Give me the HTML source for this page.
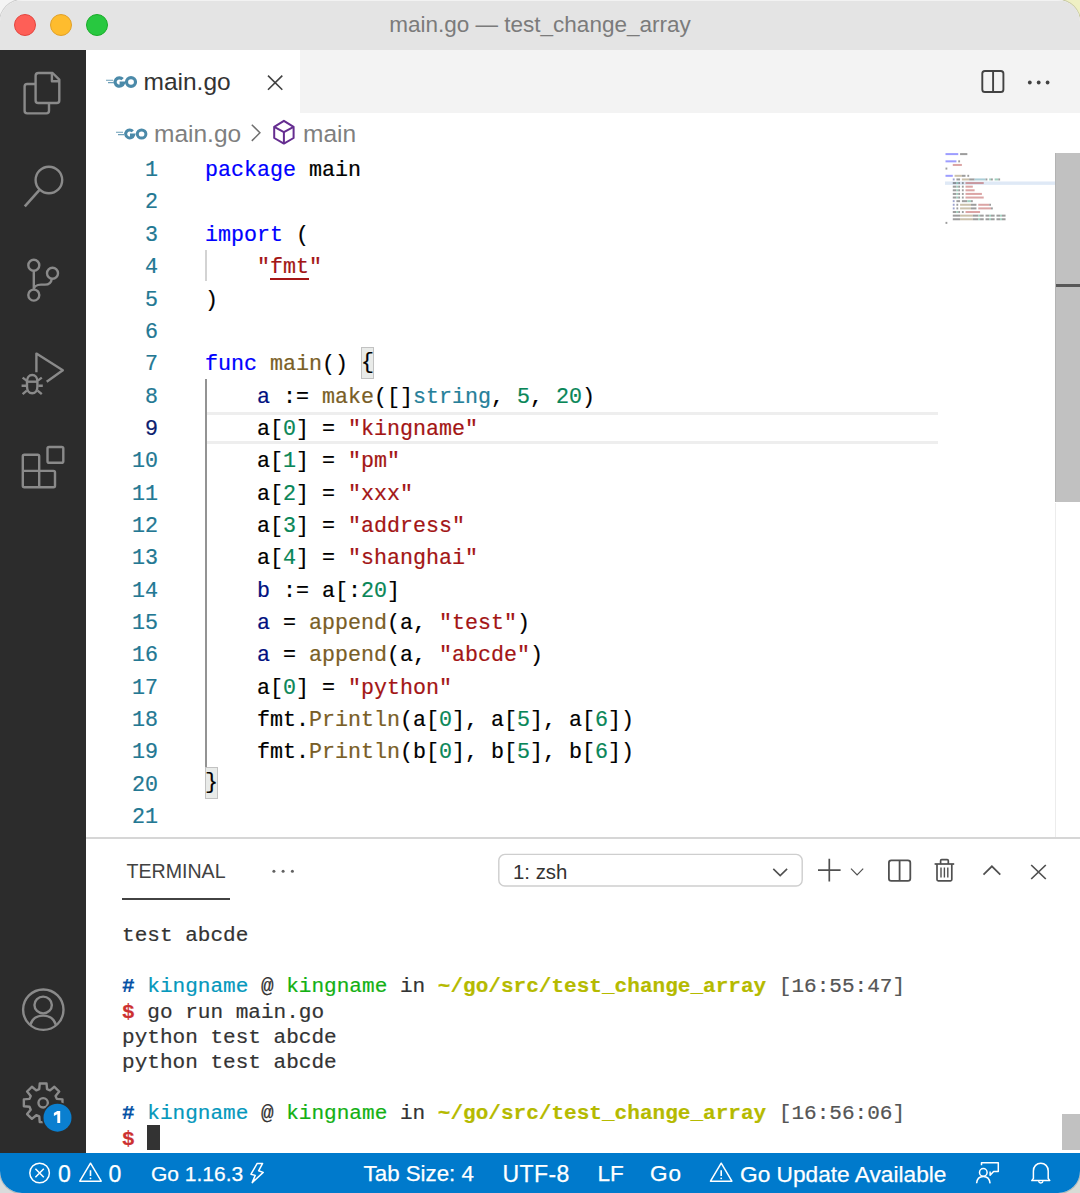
<!DOCTYPE html>
<html><head><meta charset="utf-8">
<style>
*{margin:0;padding:0;box-sizing:border-box}
html,body{width:1080px;height:1193px;overflow:hidden;background:linear-gradient(#f4f4f4,#e8e8e8 50%,#d6d8d8)}
body{position:relative;font-family:"Liberation Sans",sans-serif}
.abs{position:absolute}
#win{position:absolute;left:0;top:0;width:1080px;height:1193px;border-radius:22px;overflow:hidden;background:#fff;box-shadow:0 0 0 1px rgba(0,0,0,0.16)}
#title{left:0;top:0;width:1080px;height:50px;background:#e4e4e4;border-top:1px solid #f2f2f2}
#title .t{left:0;width:1080px;top:10px;text-align:center;font-size:22.5px;color:#7b7b7b;line-height:28px}
.tl{width:22px;height:22px;border-radius:50%;top:13.2px}
#act{left:0;top:50px;width:86px;height:1103px;background:#2c2c2c}
#tabs{left:86px;top:50px;width:994px;height:62.8px;background:#f3f3f3}
#tab1{left:86px;top:50px;width:214px;height:62.8px;background:#fff}
.mono{font-family:"Liberation Mono",monospace;-webkit-text-stroke:0.2px currentColor}
#code{left:86px;top:152.85px;width:994px}
.cl span.brm{display:inline-block;height:31.8px;line-height:32.35px;background:#e9ebe9;outline:1.5px solid #c2c2c2;outline-offset:-1.5px;vertical-align:top;margin-top:-2.3px}
.ln{position:absolute;left:0;width:72px;padding-top:2.3px;text-align:right;color:#237893;font-size:21.67px;line-height:32.35px;height:32.35px}
.cl{position:absolute;left:119px;padding-top:2.3px;white-space:pre;color:#000;font-size:21.67px;line-height:32.35px;height:32.35px}
.k{color:#0000ff}.f{color:#795e26}.s{color:#a31515}.n{color:#098658}.ty{color:#267f99}.v{color:#001080}
.st{top:1159.5px;line-height:28px;color:#fff;font-size:21px;white-space:nowrap;-webkit-text-stroke:0.25px #fff}
#status{left:0;top:1153.4px;width:1080px;height:40px;background:#007acc;color:#fff;font-size:20px}
#term .tline{position:absolute;left:122px;white-space:pre;font-size:21.06px;line-height:25.4px;height:25.4px;color:#333}
</style></head><body>
<div class="abs" style="left:0;top:0;width:40px;height:40px;background:#f4f4f4"></div>
<div class="abs" style="left:1040px;top:0;width:40px;height:40px;background:#eff0c4"></div>
<div class="abs" style="left:0;top:1153px;width:40px;height:40px;background:#d9dbdb"></div>
<div class="abs" style="left:1040px;top:1153px;width:40px;height:40px;background:#d8dcd6"></div>
<div id="win">
  <div id="title" class="abs">
    <div class="abs tl" style="left:14px;background:#fe5f57;border:1px solid #e2463f"></div>
    <div class="abs tl" style="left:50px;background:#febc2e;border:1px solid #e0a028"></div>
    <div class="abs tl" style="left:86px;background:#28c840;border:1px solid #1aab29"></div>
    <div class="abs t">main.go — test_change_array</div>
  </div>
  <div id="act" class="abs"></div>
  <svg class="abs" style="left:0;top:0" width="86" height="1193" viewBox="0 0 86 1193" fill="none" stroke="#8a8a8a" stroke-width="2.4" stroke-linejoin="round" stroke-linecap="butt">
    <!-- files -->
    <path d="M35.6 84 H27.2 Q24.6 84 24.6 86.6 V110.8 Q24.6 113.4 27.2 113.4 H46.4 Q49 113.4 49 110.8 V103"/>
    <path d="M38.4 73 H52.6 L59.3 79.7 V100.4 Q59.3 103 56.7 103 H38.2 Q35.6 103 35.6 100.4 V75.8 Q35.6 73 38.4 73 Z"/>
    <path d="M51.9 73 V81.2 H59.3" />
    <!-- search -->
    <circle cx="48.9" cy="180" r="13.3"/>
    <path d="M39.3 190.2 L24.8 206.3" stroke-width="2.6"/>
    <!-- scm -->
    <circle cx="33.8" cy="265.3" r="5.5"/>
    <circle cx="52.5" cy="273.3" r="5.5"/>
    <circle cx="33.8" cy="295.1" r="5.5"/>
    <path d="M33.8 270.8 V289.6"/>
    <path d="M51.8 278.8 C51.2 283 48.5 284.6 45 284.6 H41 C36.5 284.6 33.8 286.8 33.8 290"/>
    <!-- debug -->
    <path d="M36.4 372.2 V353.6 L62.8 370.3 L46.7 381.7"/>
    <path d="M27 381.5 C27 377.6 29.2 375 32.2 375 C35.2 375 37.4 377.6 37.4 381.5 V386.5 C37.4 390.6 35.2 393.2 32.2 393.2 C29.2 393.2 27 390.6 27 386.5 Z"/>
    <path d="M27 381.7 H37.4"/>
    <path d="M22.6 377.6 L26.6 380.6 M21.6 385.8 H26 M22.6 394.2 L26.8 390.6 M41.8 377.6 L37.8 380.6 M42.8 385.8 H38.4 M41.8 394.2 L37.6 390.6"/>
    <!-- extensions -->
    <path d="M22.8 456.3 Q22.8 454.8 24.3 454.8 H37.7 Q39.2 454.8 39.2 456.3 V470.9 H53.5 Q55 470.9 55 472.4 V485.8 Q55 487.3 53.5 487.3 H24.3 Q22.8 487.3 22.8 485.8 Z"/>
    <path d="M22.8 470.9 H39.2 V487.3"/>
    <rect x="47.5" y="447" width="15.8" height="15.8" rx="1.6"/>
    <!-- account -->
    <circle cx="43.3" cy="1009.7" r="20.2"/>
    <ellipse cx="43.15" cy="1005" rx="8.7" ry="8.4"/>
    <path d="M30.3 1024.8 C32.3 1018.6 37.3 1015.6 43.1 1015.6 C48.9 1015.6 53.9 1018.6 55.9 1024.8"/>
    <!-- gear -->
    <path d="M39.24 1089.15 L39.75 1083.50 L46.55 1083.50 L47.06 1089.15 L50.03 1090.38 L54.39 1086.74 L59.21 1091.56 L55.57 1095.92 L56.80 1098.89 L62.45 1099.40 L62.45 1106.20 L56.80 1106.71 L55.57 1109.68 L59.21 1114.04 L54.39 1118.86 L50.03 1115.22 L47.06 1116.45 L46.55 1122.10 L39.75 1122.10 L39.24 1116.45 L36.27 1115.22 L31.91 1118.86 L27.09 1114.04 L30.73 1109.68 L29.50 1106.71 L23.85 1106.20 L23.85 1099.40 L29.50 1098.89 L30.73 1095.92 L27.09 1091.56 L31.91 1086.74 L36.27 1090.38 Z"/>
    <circle cx="43.15" cy="1102.8" r="4.7"/>
    <circle cx="57.5" cy="1117.7" r="15.6" fill="#2c2c2c" stroke="none"/>
    <circle cx="57.5" cy="1117.7" r="14" fill="#0a7fd0" stroke="none"/>
    <path d="M57.3 1110.9 H60.2 V1122.9 H57.3 V1114.3 L53.9 1115.9 V1113.1 Z" fill="#fff" stroke="none"/>
  </svg>
  <div id="tabs" class="abs"></div>
  <div id="tab1" class="abs"></div>
  <svg class="abs" style="left:0;top:0" width="1080" height="160" viewBox="0 0 1080 160" fill="none">
    <!-- go icon tab -->
    <g stroke="#4b8aa9" stroke-width="3.2" stroke-linecap="butt">
      <path d="M122.6 79.2 A4.3 4.2 0 1 0 123.5 83.2 H119.6"/>
      <ellipse cx="131" cy="82" rx="4.5" ry="4.3"/>
    </g>
    <path d="M106 80.2 H113 M108 82.6 H114" stroke="#6c9fb8" stroke-width="1.1"/>
    <!-- tab close -->
    <path d="M268 75.6 L282.3 89.8 M282.3 75.6 L268 89.8" stroke="#424242" stroke-width="1.6"/>
    <!-- split editor -->
    <rect x="982.3" y="71" width="21.1" height="21" rx="2.6" stroke="#424242" stroke-width="1.9"/>
    <path d="M993.1 71 V92" stroke="#424242" stroke-width="1.9"/>
    <circle cx="1029.8" cy="82.5" r="1.9" fill="#424242"/>
    <circle cx="1038.7" cy="82.5" r="1.9" fill="#424242"/>
    <circle cx="1047.6" cy="82.5" r="1.9" fill="#424242"/>
    <!-- breadcrumb go icon -->
    <g stroke="#4b8aa9" stroke-width="3" stroke-linecap="butt">
      <path d="M132.8 131.2 A4.1 4.0 0 1 0 133.7 135.1 H130"/>
      <ellipse cx="141.6" cy="134" rx="4.3" ry="4.1"/>
    </g>
    <path d="M116 132.2 H123 M118 134.6 H124" stroke="#6c9fb8" stroke-width="1.1"/>
    <!-- chevron -->
    <path d="M251.8 124.7 L259.9 132.8 L251.8 140.9" stroke="#6f6f6f" stroke-width="1.5"/>
    <!-- cube -->
    <g stroke="#652d90" stroke-width="2" stroke-linejoin="round">
      <path d="M283.9 120.8 L293.6 126.9 V138 L283.9 143.6 L274.2 138 V126.9 Z"/>
      <path d="M274.2 126.9 L283.9 132.2 L293.6 126.9 M283.9 132.2 V143.6"/>
    </g>
  </svg>
  <div class="abs" style="left:143.5px;top:66.5px;font-size:24.5px;line-height:30px;color:#333">main.go</div>
  <div class="abs" style="left:154px;top:118.5px;font-size:24.5px;line-height:30px;color:#7f7f7f">main.go</div>
  <div class="abs" style="left:303px;top:118.5px;font-size:24.5px;line-height:30px;color:#7f7f7f">main</div>

  <!-- editor decorations -->
  <div class="abs" style="left:207.4px;top:411.65px;width:730.6px;height:32.35px;border-top:3px solid #eeeeee;border-bottom:3px solid #eeeeee"></div>
  <div class="abs" style="left:205.2px;top:250.4px;width:1.4px;height:31px;background:#d3d3d3"></div>
  <div class="abs" style="left:205.1px;top:379.3px;width:1.7px;height:388.2px;background:#939393"></div>
  <div class="abs" style="left:270.2px;top:278.4px;width:38.6px;height:2.1px;background:#a31515"></div>
  <svg class="abs" style="left:0;top:0" width="1080" height="300" viewBox="0 0 1080 300"><rect x="945" y="181.46" width="110" height="3.4" fill="#dfe9f6"/><g opacity="0.38"><rect x="945.50" y="153.10" width="12.74" height="2" fill="#0000ff"/><rect x="960.06" y="153.10" width="7.28" height="2" fill="#000000"/><rect x="945.50" y="160.34" width="10.92" height="2" fill="#0000ff"/><rect x="958.24" y="160.34" width="1.82" height="2" fill="#000000"/><rect x="952.78" y="163.96" width="9.10" height="2" fill="#a31515"/><rect x="945.50" y="167.58" width="1.82" height="2" fill="#000000"/><rect x="945.50" y="174.82" width="7.28" height="2" fill="#0000ff"/><rect x="954.60" y="174.82" width="7.28" height="2" fill="#795e26"/><rect x="961.88" y="174.82" width="3.64" height="2" fill="#000000"/><rect x="967.34" y="174.82" width="1.82" height="2" fill="#000000"/><rect x="952.78" y="178.44" width="1.82" height="2" fill="#001080"/><rect x="956.42" y="178.44" width="3.64" height="2" fill="#000000"/><rect x="961.88" y="178.44" width="7.28" height="2" fill="#795e26"/><rect x="969.16" y="178.44" width="5.46" height="2" fill="#000000"/><rect x="974.62" y="178.44" width="10.92" height="2" fill="#267f99"/><rect x="985.54" y="178.44" width="1.82" height="2" fill="#000000"/><rect x="989.18" y="178.44" width="1.82" height="2" fill="#098658"/><rect x="991.00" y="178.44" width="1.82" height="2" fill="#000000"/><rect x="994.64" y="178.44" width="3.64" height="2" fill="#098658"/><rect x="998.28" y="178.44" width="1.82" height="2" fill="#000000"/><rect x="952.78" y="182.06" width="3.64" height="2" fill="#000000"/><rect x="956.42" y="182.06" width="1.82" height="2" fill="#098658"/><rect x="958.24" y="182.06" width="1.82" height="2" fill="#000000"/><rect x="961.88" y="182.06" width="1.82" height="2" fill="#000000"/><rect x="965.52" y="182.06" width="18.20" height="2" fill="#a31515"/><rect x="952.78" y="185.68" width="3.64" height="2" fill="#000000"/><rect x="956.42" y="185.68" width="1.82" height="2" fill="#098658"/><rect x="958.24" y="185.68" width="1.82" height="2" fill="#000000"/><rect x="961.88" y="185.68" width="1.82" height="2" fill="#000000"/><rect x="965.52" y="185.68" width="7.28" height="2" fill="#a31515"/><rect x="952.78" y="189.30" width="3.64" height="2" fill="#000000"/><rect x="956.42" y="189.30" width="1.82" height="2" fill="#098658"/><rect x="958.24" y="189.30" width="1.82" height="2" fill="#000000"/><rect x="961.88" y="189.30" width="1.82" height="2" fill="#000000"/><rect x="965.52" y="189.30" width="9.10" height="2" fill="#a31515"/><rect x="952.78" y="192.92" width="3.64" height="2" fill="#000000"/><rect x="956.42" y="192.92" width="1.82" height="2" fill="#098658"/><rect x="958.24" y="192.92" width="1.82" height="2" fill="#000000"/><rect x="961.88" y="192.92" width="1.82" height="2" fill="#000000"/><rect x="965.52" y="192.92" width="16.38" height="2" fill="#a31515"/><rect x="952.78" y="196.54" width="3.64" height="2" fill="#000000"/><rect x="956.42" y="196.54" width="1.82" height="2" fill="#098658"/><rect x="958.24" y="196.54" width="1.82" height="2" fill="#000000"/><rect x="961.88" y="196.54" width="1.82" height="2" fill="#000000"/><rect x="965.52" y="196.54" width="18.20" height="2" fill="#a31515"/><rect x="952.78" y="200.16" width="1.82" height="2" fill="#001080"/><rect x="956.42" y="200.16" width="3.64" height="2" fill="#000000"/><rect x="961.88" y="200.16" width="5.46" height="2" fill="#000000"/><rect x="967.34" y="200.16" width="3.64" height="2" fill="#098658"/><rect x="970.98" y="200.16" width="1.82" height="2" fill="#000000"/><rect x="952.78" y="203.78" width="1.82" height="2" fill="#001080"/><rect x="956.42" y="203.78" width="1.82" height="2" fill="#000000"/><rect x="960.06" y="203.78" width="10.92" height="2" fill="#795e26"/><rect x="970.98" y="203.78" width="5.46" height="2" fill="#000000"/><rect x="978.26" y="203.78" width="10.92" height="2" fill="#a31515"/><rect x="989.18" y="203.78" width="1.82" height="2" fill="#000000"/><rect x="952.78" y="207.40" width="1.82" height="2" fill="#001080"/><rect x="956.42" y="207.40" width="1.82" height="2" fill="#000000"/><rect x="960.06" y="207.40" width="10.92" height="2" fill="#795e26"/><rect x="970.98" y="207.40" width="5.46" height="2" fill="#000000"/><rect x="978.26" y="207.40" width="12.74" height="2" fill="#a31515"/><rect x="991.00" y="207.40" width="1.82" height="2" fill="#000000"/><rect x="952.78" y="211.02" width="3.64" height="2" fill="#000000"/><rect x="956.42" y="211.02" width="1.82" height="2" fill="#098658"/><rect x="958.24" y="211.02" width="1.82" height="2" fill="#000000"/><rect x="961.88" y="211.02" width="1.82" height="2" fill="#000000"/><rect x="965.52" y="211.02" width="14.56" height="2" fill="#a31515"/><rect x="952.78" y="214.64" width="7.28" height="2" fill="#000000"/><rect x="960.06" y="214.64" width="12.74" height="2" fill="#795e26"/><rect x="972.80" y="214.64" width="5.46" height="2" fill="#000000"/><rect x="978.26" y="214.64" width="1.82" height="2" fill="#098658"/><rect x="980.08" y="214.64" width="3.64" height="2" fill="#000000"/><rect x="985.54" y="214.64" width="3.64" height="2" fill="#000000"/><rect x="989.18" y="214.64" width="1.82" height="2" fill="#098658"/><rect x="991.00" y="214.64" width="3.64" height="2" fill="#000000"/><rect x="996.46" y="214.64" width="3.64" height="2" fill="#000000"/><rect x="1000.10" y="214.64" width="1.82" height="2" fill="#098658"/><rect x="1001.92" y="214.64" width="3.64" height="2" fill="#000000"/><rect x="952.78" y="218.26" width="7.28" height="2" fill="#000000"/><rect x="960.06" y="218.26" width="12.74" height="2" fill="#795e26"/><rect x="972.80" y="218.26" width="5.46" height="2" fill="#000000"/><rect x="978.26" y="218.26" width="1.82" height="2" fill="#098658"/><rect x="980.08" y="218.26" width="3.64" height="2" fill="#000000"/><rect x="985.54" y="218.26" width="3.64" height="2" fill="#000000"/><rect x="989.18" y="218.26" width="1.82" height="2" fill="#098658"/><rect x="991.00" y="218.26" width="3.64" height="2" fill="#000000"/><rect x="996.46" y="218.26" width="3.64" height="2" fill="#000000"/><rect x="1000.10" y="218.26" width="1.82" height="2" fill="#098658"/><rect x="1001.92" y="218.26" width="3.64" height="2" fill="#000000"/><rect x="945.50" y="221.88" width="1.82" height="2" fill="#000000"/></g></svg>
  <div class="abs" style="left:1055px;top:152.8px;width:25px;height:349.7px;background:#c1c1c1;border-left:1px solid #b3b3b3"></div>
  <div class="abs" style="left:1056px;top:284.3px;width:24px;height:2.8px;background:#585858"></div>
  <div class="abs" style="left:1055px;top:502.5px;width:1px;height:334px;background:#ececec"></div>
  <div id="code" class="abs mono">
<div class="ln" style="top:0.00px">1</div>
<div class="cl" style="top:0.00px"><span class="k">package</span> main</div>
<div class="ln" style="top:32.35px">2</div>
<div class="cl" style="top:32.35px"></div>
<div class="ln" style="top:64.70px">3</div>
<div class="cl" style="top:64.70px"><span class="k">import</span> (</div>
<div class="ln" style="top:97.05px">4</div>
<div class="cl" style="top:97.05px">    <span class="s">&quot;fmt&quot;</span></div>
<div class="ln" style="top:129.40px">5</div>
<div class="cl" style="top:129.40px">)</div>
<div class="ln" style="top:161.75px">6</div>
<div class="cl" style="top:161.75px"></div>
<div class="ln" style="top:194.10px">7</div>
<div class="cl" style="top:194.10px"><span class="k">func</span> <span class="f">main</span>() <span class="brm">{</span></div>
<div class="ln" style="top:226.45px">8</div>
<div class="cl" style="top:226.45px">    <span class="v">a</span> := <span class="f">make</span>([]<span class="ty">string</span>, <span class="n">5</span>, <span class="n">20</span>)</div>
<div class="ln" style="top:258.80px;color:#0b216f">9</div>
<div class="cl" style="top:258.80px">    a[<span class="n">0</span>] = <span class="s">&quot;kingname&quot;</span></div>
<div class="ln" style="top:291.15px">10</div>
<div class="cl" style="top:291.15px">    a[<span class="n">1</span>] = <span class="s">&quot;pm&quot;</span></div>
<div class="ln" style="top:323.50px">11</div>
<div class="cl" style="top:323.50px">    a[<span class="n">2</span>] = <span class="s">&quot;xxx&quot;</span></div>
<div class="ln" style="top:355.85px">12</div>
<div class="cl" style="top:355.85px">    a[<span class="n">3</span>] = <span class="s">&quot;address&quot;</span></div>
<div class="ln" style="top:388.20px">13</div>
<div class="cl" style="top:388.20px">    a[<span class="n">4</span>] = <span class="s">&quot;shanghai&quot;</span></div>
<div class="ln" style="top:420.55px">14</div>
<div class="cl" style="top:420.55px">    <span class="v">b</span> := a[:<span class="n">20</span>]</div>
<div class="ln" style="top:452.90px">15</div>
<div class="cl" style="top:452.90px">    <span class="v">a</span> = <span class="f">append</span>(a, <span class="s">&quot;test&quot;</span>)</div>
<div class="ln" style="top:485.25px">16</div>
<div class="cl" style="top:485.25px">    <span class="v">a</span> = <span class="f">append</span>(a, <span class="s">&quot;abcde&quot;</span>)</div>
<div class="ln" style="top:517.60px">17</div>
<div class="cl" style="top:517.60px">    a[<span class="n">0</span>] = <span class="s">&quot;python&quot;</span></div>
<div class="ln" style="top:549.95px">18</div>
<div class="cl" style="top:549.95px">    fmt.<span class="f">Println</span>(a[<span class="n">0</span>], a[<span class="n">5</span>], a[<span class="n">6</span>])</div>
<div class="ln" style="top:582.30px">19</div>
<div class="cl" style="top:582.30px">    fmt.<span class="f">Println</span>(b[<span class="n">0</span>], b[<span class="n">5</span>], b[<span class="n">6</span>])</div>
<div class="ln" style="top:614.65px">20</div>
<div class="cl" style="top:614.65px"><span class="brm">}</span></div>
<div class="ln" style="top:647.00px">21</div>
<div class="cl" style="top:647.00px"></div>
  </div>

  <!-- panel -->
  <div class="abs" style="left:86px;top:837px;width:994px;height:2px;background:#d6d6d6"></div>
  <div class="abs" style="left:126.5px;top:857px;font-size:19.6px;line-height:28px;color:#424242;letter-spacing:0px">TERMINAL</div>
  <div class="abs" style="left:122px;top:897.8px;width:108px;height:2.4px;background:#424242"></div>
  <svg class="abs" style="left:0;top:830px" width="1080" height="80" viewBox="0 830 1080 80" fill="none">
    <circle cx="273.9" cy="871.3" r="1.5" fill="#616161"/>
    <circle cx="283.1" cy="871.3" r="1.5" fill="#616161"/>
    <circle cx="292.4" cy="871.3" r="1.5" fill="#616161"/>
    <rect x="498.8" y="854.4" width="303.4" height="31.6" rx="6" stroke="#cecece" stroke-width="1.4" fill="#fff"/>
    <path d="M773.3 868.9 L780.2 875.6 L787.1 868.9" stroke="#505050" stroke-width="1.6"/>
    <path d="M829.3 858.8 V881.4 M818 870.1 H840.6" stroke="#505050" stroke-width="1.7"/>
    <path d="M851 868.7 L857.1 874.8 L863.2 868.7" stroke="#505050" stroke-width="1.2"/>
    <rect x="888.9" y="860.3" width="21.4" height="20.6" rx="2.4" stroke="#505050" stroke-width="1.8"/>
    <path d="M899.6 860.3 V880.9" stroke="#505050" stroke-width="1.8"/>
    <g stroke="#505050" stroke-width="1.7" stroke-linejoin="round">
      <path d="M934.6 864 H954.2"/>
      <path d="M940.6 864 V860.8 Q940.6 859.7 941.7 859.7 H947.2 Q948.3 859.7 948.3 860.8 V864"/>
      <path d="M937 864 V879.6 Q937 880.8 938.2 880.8 H950.6 Q951.8 880.8 951.8 879.6 V864"/>
      <path d="M941 867.5 V877.5 M944.4 867.5 V877.5 M947.8 867.5 V877.5" stroke-width="1.4"/>
    </g>
    <path d="M983.5 874.6 L991.9 866.3 L1000.3 874.6" stroke="#505050" stroke-width="1.7"/>
    <path d="M1031.2 865 L1045.8 879 M1045.8 865 L1031.2 879" stroke="#505050" stroke-width="1.7"/>
  </svg>
  <div class="abs" style="left:513px;top:857.8px;font-size:20.4px;line-height:28px;color:#333">1: zsh</div>
  <div class="abs" style="left:1062px;top:1114px;width:18px;height:36px;background:#c1c1c1"></div>
  <div id="term" class="abs mono" style="left:0;top:1.5px">
<div class="tline" style="top:921.8px">test abcde</div>
<div class="tline" style="top:972.6px"><b style="color:#0451a5">#</b> <span style="color:#0598bc">kingname</span> @ <span style="color:#13b013">kingname</span> in <b style="color:#b5ba00">~/go/src/test_change_array</b> <span style="color:#555">[16:55:47]</span></div>
<div class="tline" style="top:998px"><b style="color:#cd3131">$</b> go run main.go</div>
<div class="tline" style="top:1023.4px">python test abcde</div>
<div class="tline" style="top:1048.8px">python test abcde</div>
<div class="tline" style="top:1099.6px"><b style="color:#0451a5">#</b> <span style="color:#0598bc">kingname</span> @ <span style="color:#13b013">kingname</span> in <b style="color:#b5ba00">~/go/src/test_change_array</b> <span style="color:#555">[16:56:06]</span></div>
<div class="tline" style="top:1125px"><b style="color:#cd3131">$</b></div>
<div class="abs" style="left:147.3px;top:1123.5px;width:12.7px;height:24.8px;background:#333"></div>
  </div>

  <div id="status" class="abs"></div>
  <svg class="abs" style="left:0;top:1153px" width="1080" height="40" viewBox="0 1153 1080 40" fill="none" stroke="#fff">
    <circle cx="39.6" cy="1173" r="9.8" stroke-width="1.5"/>
    <path d="M35.4 1168.8 L43.8 1177.2 M43.8 1168.8 L35.4 1177.2" stroke-width="1.5"/>
    <path d="M90.5 1163.2 L101.2 1181.2 H79.8 Z" stroke-width="1.5" stroke-linejoin="round"/>
    <path d="M90.5 1170.2 V1176" stroke-width="1.6"/>
    <circle cx="90.5" cy="1178.3" r="0.9" fill="#fff" stroke="none"/>
    <path d="M257.2 1163.4 H262.6 L258.6 1170.8 L263.2 1172.4 L252.2 1182.6 L255.2 1175.4 L251 1174.2 Z" stroke-width="1.5" stroke-linejoin="round"/>
    <path d="M721.2 1163.2 L731.9 1181.2 H710.5 Z" stroke-width="1.5" stroke-linejoin="round"/>
    <path d="M721.2 1170.2 V1176" stroke-width="1.6"/>
    <circle cx="721.2" cy="1178.3" r="0.9" fill="#fff" stroke="none"/>
    <g stroke-width="1.5" stroke-linejoin="round">
      <circle cx="983.3" cy="1172.4" r="3.8"/>
      <path d="M976.6 1183.3 C977 1179 979.8 1176.6 983.3 1176.6 C986.8 1176.6 989.6 1179 990.1 1183.3"/>
      <path d="M981.5 1165.2 V1162.7 H998.3 V1171.5 H993.6 L990.1 1175.3 L990.1 1171.5"/>
    </g>
    <path d="M1031.8 1180.6 H1049.8 L1048.2 1178.4 V1171 C1048.2 1166.4 1045 1163.2 1040.8 1163.2 C1036.6 1163.2 1033.4 1166.4 1033.4 1171 V1178.4 Z" stroke-width="1.5" stroke-linejoin="round"/>
    <path d="M1038.6 1181.2 C1039 1183.6 1042.6 1183.6 1043 1181.2" stroke-width="1.4"/>
  </svg>
  <div class="abs st" style="left:58px;font-size:23px;top:1159.5px">0</div>
  <div class="abs st" style="left:108.6px;font-size:23px;top:1159.5px">0</div>
  <div class="abs st" style="left:151px;font-size:21px">Go 1.16.3</div>
  <div class="abs st" style="left:363.6px;font-size:22.3px">Tab Size: 4</div>
  <div class="abs st" style="left:502.5px;font-size:23px;letter-spacing:0.4px">UTF-8</div>
  <div class="abs st" style="left:597.5px;font-size:22.5px">LF</div>
  <div class="abs st" style="left:650px;font-size:22.5px;letter-spacing:1px">Go</div>
  <div class="abs st" style="left:740px;font-size:22.7px">Go Update Available</div>
</div>
</body></html>
